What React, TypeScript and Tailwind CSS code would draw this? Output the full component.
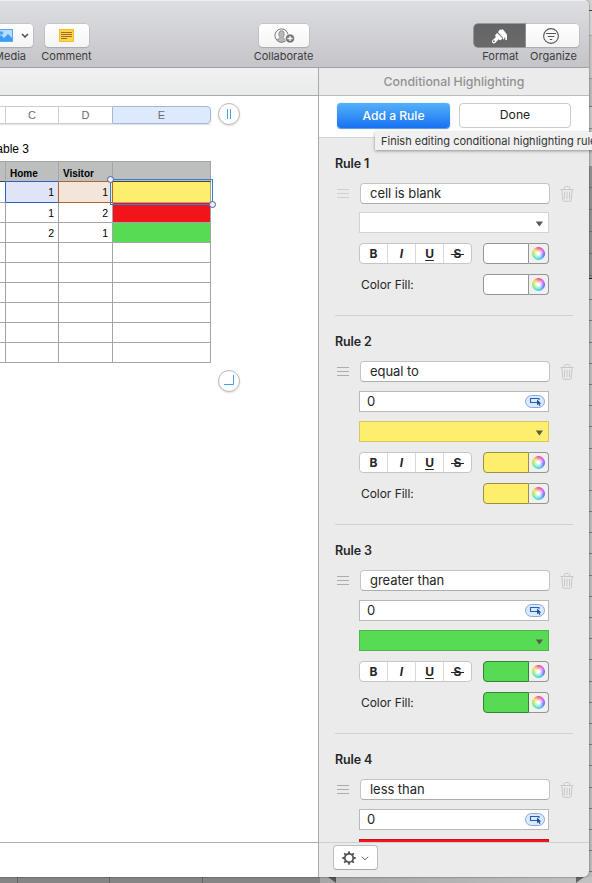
import type { ReactNode } from 'react'
import clsx from 'clsx'

interface Rule {
  title: string
  condition: string
  value?: string
  fill: string
  fillBorder: string
  wellBorder: string
  mutedGrip?: boolean
}

const RULES: Rule[] = [
  { title: 'Rule 1', condition: 'cell is blank', fill: 'bg-white', fillBorder: 'border-[#d3d3d3]', wellBorder: 'border-[#959595]', mutedGrip: true },
  { title: 'Rule 2', condition: 'equal to', value: '0', fill: 'bg-[#feee6e]', fillBorder: 'border-[#d5c85e]', wellBorder: 'border-[#989043]' },
  { title: 'Rule 3', condition: 'greater than', value: '0', fill: 'bg-[#57db54]', fillBorder: 'border-[#4ab847]', wellBorder: 'border-[#348332]' },
  { title: 'Rule 4', condition: 'less than', value: '0', fill: 'bg-[#f3131b]', fillBorder: 'border-[#cd1017]', wellBorder: 'border-[#920b10]' },
]

function PictureIcon() {
  return (
    <svg width="16" height="14" viewBox="0 0 16 14">
      <rect x="0.5" y="0.5" width="15" height="12" fill="#b8dcfb" stroke="#58a9f2" />
      <circle cx="4.5" cy="4" r="1.8" fill="#4ba4f5" />
      <path d="M1 12V9l3-3 3 3 4-4 4 4v3z" fill="#3c9cf6" />
    </svg>
  )
}

function NoteIcon() {
  return (
    <svg width="15" height="13" viewBox="0 0 15 13">
      <rect x="0.5" y="0.5" width="14" height="12" fill="#fdd545" stroke="#f6bd33" />
      <path d="M2 3.5h11M2 5.5h11M2 7.5h11M2 9.5h6" stroke="#96602b" strokeWidth="0.9" />
    </svg>
  )
}

function PersonAddIcon() {
  return (
    <svg width="22" height="16" viewBox="0 0 22 16" className="mt-px">
      <circle cx="8.5" cy="7.5" r="6.6" fill="#f7f7f7" stroke="#797979" />
      <path d="M3.7 12.2c1-1.6 3-1.4 3.4-2.6-.9-1.2-1.4-2.7-1.2-4.3.3-1.7 1.3-2.5 2.6-2.5s2.4.8 2.6 2.5c.2 1.6-.3 3.1-1.2 4.3.4 1.2 2.3 1 3.4 2.6a6.6 6.6 0 0 1-9.6 0z" fill="#b8b8b8" stroke="#7c7c7c" strokeWidth="0.8" />
      <circle cx="17" cy="10.5" r="4.6" fill="#717171" stroke="#fbfbfb" strokeWidth="0.8" />
      <path d="M14.4 10.5h5.2M17 7.9v5.2" stroke="#fff" strokeWidth="1.3" />
    </svg>
  )
}

function BrushIcon() {
  return (
    <svg width="18" height="16" viewBox="0 0 18 16">
      <path d="M6.9 4.2 9 1.2l1.1 1L11 .9l1.3.9 2.9 3.6c.5.8.8 1.3.8 2.1v4c0 1-1.7 1-1.7 0V9.3l-1 .3v1.2c0 .8-1.4.8-1.4 0v-.9z" fill="#fff" />
      <path d="m6.1 5 5.5 5.2-1.4 1.5c-.7.6-1.5.6-2.1 0l-.5-.4-3.2 3.5c-1.8 1.9-4.7-.6-2.9-2.5L5 9l-.5-.6c-.5-.6-.4-1.2 0-1.7z" fill="#fff" />
      <path d="m6.5 4.5 5.6 5.3" stroke="#666" strokeWidth="0.6" />
      <circle cx="2.9" cy="13.2" r="0.9" fill="#666" />
    </svg>
  )
}

function FilterIcon() {
  return (
    <svg width="18" height="18" viewBox="0 0 18 18">
      <circle cx="9" cy="9" r="7.4" fill="none" stroke="#585858" strokeWidth="1.1" />
      <path d="M4 6.5h10M5.7 9.5h6.6M7.8 12.5h2.4" stroke="#585858" strokeWidth="1.2" />
    </svg>
  )
}

function TrashIcon() {
  return (
    <svg width="14" height="16" viewBox="0 0 14 16" fill="none" stroke="#c8c8c8">
      <path d="M.5 3.5h13M4.3 3.2V2c0-1 .5-1.5 1.3-1.5h2.8c.8 0 1.3.5 1.3 1.5v1.2M1.8 3.8l1 10.2c.1.9.5 1.3 1.3 1.3h5.8c.8 0 1.2-.4 1.3-1.3l1-10.2" />
      <path d="M4.5 5.7v7.6M7 5.7v7.6M9.5 5.7v7.6" />
    </svg>
  )
}

function CellPickerIcon() {
  return (
    <svg width="20" height="13" viewBox="0 0 20 13">
      <rect x="0.5" y="0.5" width="19" height="12" rx="6" fill="#dce8fb" stroke="#86a9e6" />
      <path d="M12 7.5H5.5v-4h8.5V5" fill="none" stroke="#1f62b5" strokeWidth="1.1" />
      <path d="m12 4.6 4.3 3.9-1.8.1 1 1.9-1.1.5-1-2L12 10.3z" fill="#17539f" />
    </svg>
  )
}

function GearIcon() {
  const teeth = [0, 45, 90, 135, 180, 225, 270, 315]
  return (
    <svg width="14" height="14" viewBox="0 0 14 14">
      <circle cx="7" cy="7" r="4.2" fill="none" stroke="#555" strokeWidth="1.7" />
      {teeth.map((a) => (
        <path key={a} d="M5.6 3 6.3.2h1.4L8.4 3z" fill="#555" transform={`rotate(${a} 7 7)`} />
      ))}
    </svg>
  )
}

function ToolButton({ className, children }: { className?: string; children: ReactNode }) {
  return (
    <button className={clsx('flex h-[23px] items-center justify-center rounded-[4px] bg-gradient-to-b from-white to-[#f3f4f4] shadow-[0_0_0_0.5px_#b4b4b7,0_1px_1px_#a5a5a8]', className)}>
      {children}
    </button>
  )
}

function Toolbar() {
  return (
    <header className="flex h-[68px] shrink-0 rounded-tr-[5px] border-t border-b border-t-[#eeeff0] border-b-[#a2a2a4] bg-gradient-to-b from-[#dddee1] to-[#c5c5c9] pt-[23px] text-[11px] leading-[18px] text-[#3c3c3e]">
      <div className="flex w-[33px] flex-col items-end">
        <ToolButton className="w-[50px] gap-[8px] pl-[10px]">
          <PictureIcon />
          <svg width="8" height="6" viewBox="0 0 8 6" fill="none" stroke="#4a4a4a" strokeWidth="1.5">
            <path d="m1 1 3 3 3-3" />
          </svg>
        </ToolButton>
        <span className="mr-[7px]">Media</span>
      </div>
      <div className="ml-[4px] flex w-[59px] flex-col items-center">
        <ToolButton className="w-[44px]"><NoteIcon /></ToolButton>
        <span>Comment</span>
      </div>
      <div className="ml-[153px] flex w-[70px] flex-col items-center">
        <ToolButton className="w-[50px]"><PersonAddIcon /></ToolButton>
        <span className="mr-px">Collaborate</span>
      </div>
      <div className="ml-[155px] flex w-[52px] flex-col items-center">
        <button className="flex h-[23px] w-[52px] items-center justify-center rounded-l-[4px] bg-gradient-to-b from-[#636466] to-[#6a6a6b] shadow-[0_0_0_0.5px_#5c5c5e]">
          <BrushIcon />
        </button>
        <span className="ml-px">Format</span>
      </div>
      <div className="flex w-[53px] flex-col items-center">
        <ToolButton className="w-[53px] rounded-l-none pr-[4px]"><FilterIcon /></ToolButton>
        <span className="ml-[2px]">Organize</span>
      </div>
    </header>
  )
}

function Row({ cells, height = 'h-[20px]' }: { cells: ReactNode[]; height?: string }) {
  const widths = ['w-[6px]', 'w-[53px]', 'w-[54px]', 'w-[98px]']
  return (
    <div className={clsx('flex', height)}>
      {widths.map((w, i) => (
        <div key={w} className={clsx('border-r border-b border-[#a5a5a5]', w)}>{cells[i]}</div>
      ))}
    </div>
  )
}

function Value({ children }: { children: ReactNode }) {
  return <div className="flex h-full items-center justify-end pt-[2px] pr-[4px] text-[10.5px]">{children}</div>
}

function HandleCircle({ className, children }: { className?: string; children: ReactNode }) {
  return (
    <div className={clsx('flex size-[22px] items-center justify-center rounded-full border border-[#bcbcbc] bg-white shadow-[0_1px_2px_#ddd]', className)}>
      {children}
    </div>
  )
}

function Sheet() {
  return (
    <main className="flex w-[318px] flex-col bg-white">
      <div className="h-[28px] border-b border-[#a9aaaa] bg-gradient-to-b from-[#f0f1f1] to-[#e9eaea]" />
      <div className="flex h-[746px] flex-col pt-[7px]">
        <div className="flex h-[22px] items-center">
          <div className="mt-px flex h-[18px] w-[211px] text-[11px] leading-[16px] text-[#6c6c6c] shadow-[0_1px_1px_#e4e4e4]">
            <div className="w-[6px] border-y border-r border-[#cdcdcd]" />
            <div className="w-[53px] border-y border-r border-[#cdcdcd] text-center">C</div>
            <div className="w-[53px] border-y border-[#cdcdcd] text-center">D</div>
            <div className="w-[99px] rounded-r-[4px] border border-[#a2b9d4] bg-[#dceafc] text-center">E</div>
          </div>
          <HandleCircle className="ml-[7px]">
            <svg width="4" height="10" viewBox="0 0 4 10" stroke="#4ba5ea">
              <path d="M.5 0v10M3.5 0v10" />
            </svg>
          </HandleCircle>
        </div>
        <div className="mt-[16px] flex h-[16px] w-[29px] items-center justify-end overflow-hidden text-[12px] whitespace-nowrap text-black">Table 3</div>
        <div className="relative mt-[4px] w-[211px] border-t border-[#a5a5a5] text-[10px] text-black">
          <div className="flex h-[20px] bg-[#bdbfbe] font-bold">
            <div className="w-[6px] border-r border-b border-[#a5a5a5] border-b-[#444]" />
            <div className="flex w-[53px] items-center border-r border-b border-[#a5a5a5] border-b-[#2d5fcb] pt-[3px] pl-[4px]">Home</div>
            <div className="flex w-[54px] items-center border-r border-b border-[#a5a5a5] border-b-[#b5622d] pt-[3px] pl-[4px]">Visitor</div>
            <div className="w-[98px] border-r border-b border-[#a5a5a5] border-b-[#444]" />
          </div>
          <div className="flex h-[21px]">
            <div className="w-[6px] border-r border-b border-r-[#2d5fcb] border-b-[#a5a5a5]" />
            <div className="w-[53px] border-r border-b border-r-[#b5622d] border-b-[#2d5fcb] bg-[#dfe4f7]"><Value>1</Value></div>
            <div className="w-[54px] border-r border-b border-[#b5622d] bg-[#f4e5db]"><Value>1</Value></div>
            <div className="w-[98px] border-r border-b border-[#a5a5a5] bg-[#feee6e]" />
          </div>
          <Row cells={[null, <Value>1</Value>, <Value>2</Value>, <div className="h-full bg-[#f3131b]" />]} />
          <Row cells={[null, <Value>2</Value>, <Value>1</Value>, <div className="h-full bg-[#57db54]" />]} />
          {[0, 1, 2, 3, 4, 5].map((i) => <Row key={i} cells={[]} />)}

          {/* selection outline with its two drag handles */}
          <div className="absolute top-[17px] left-[110px] h-[26px] w-[103px] border border-[#357fc8]">
            <div className="absolute -top-[4px] -left-[4px] size-[7px] rounded-full border border-[#4a5f9c] bg-[#eef0fa]" />
            <div className="absolute -right-[4px] -bottom-[4px] size-[7px] rounded-full border border-[#4a5f9c] bg-[#eef0fa]" />
          </div>
        </div>
        <HandleCircle className="mt-[7px] ml-[218px]">
          <svg width="10" height="10" viewBox="0 0 10 10" fill="none" stroke="#3da0ee" className="mr-px mb-[2px]">
            <path d="M0 9.5h9.5V0" />
          </svg>
        </HandleCircle>
      </div>
      <div className="flex-1 border-t border-[#adadad]" />
    </main>
  )
}

function ColorWell({ fill, border }: { fill: string; border: string }) {
  return (
    <div className="flex h-[21px] w-[66px]">
      <div className={clsx('w-[46px] rounded-l-[4px] border', fill, border)} />
      <div className="flex flex-1 items-center justify-center rounded-r-[4px] border border-l-0 border-[#959595] bg-[#f0f0f0]">
        <div className="flex size-[13px] rounded-full bg-[conic-gradient(#ee4a62,#df50ee,#5f62f0,#46b9f5,#43e5bd,#85ec5d,#f3dc4b,#ee4a62)]">
          <div className="size-full rounded-full bg-[radial-gradient(circle,#fff_12%,#ffffff00_66%)]" />
        </div>
      </div>
    </div>
  )
}

function StyleButtons() {
  return (
    <div className="flex h-[21px] w-[113px] divide-x divide-[#d9d9d9] rounded-[4px] border border-[#c6c6c6] bg-white text-[12px] font-bold text-[#262626] [&>button]:flex-1">
      <button>B</button>
      <button className="italic">I</button>
      <button className="underline underline-offset-2">U</button>
      <button className="flex items-center justify-center">
        <span className="relative">
          S
          <span className="absolute top-1/2 -right-[3px] -left-[3px] h-px bg-[#262626]" />
        </span>
      </button>
    </div>
  )
}

function RuleSection({ rule }: { rule: Rule }) {
  return (
    <section className="ml-[16px] w-[239px] shrink-0 pt-[16px] text-[13px] tracking-[-0.05px] text-[#262626]">
      <h3 className="h-[20px] text-[12.5px] leading-[20px] font-semibold tracking-[-0.1px]">{rule.title}</h3>
      <div className="mt-[9px] flex items-center">
        <div className="mx-[2px] flex w-[12px] flex-col gap-[3px]">
          {[0, 1, 2].map((i) => (
            <div key={i} className={clsx('h-px', rule.mutedGrip ? 'bg-[#cfcfcf]' : 'bg-[#adadad]')} />
          ))}
        </div>
        <div className="ml-[9px] flex h-[21px] w-[190px] items-center rounded-[4px] border border-[#c4c4c4] border-b-[#adadad] bg-white pl-[9px]">
          {rule.condition}
        </div>
        <div className="ml-[10px]"><TrashIcon /></div>
      </div>
      <div className="ml-[24px] w-[190px]">
        {rule.value && (
          <div className="mt-[9px] flex h-[21px] items-center justify-between border border-[#b9b9b9] bg-white pr-[3px] pl-[7px]">
            {rule.value}
            <CellPickerIcon />
          </div>
        )}
        <div className={clsx('flex h-[21px] items-center justify-end border pr-[5px]', rule.value ? 'mt-[9px]' : 'mt-[8px]', rule.fill, rule.fillBorder)}>
          <svg width="8" height="6" viewBox="0 0 8 6" className="mt-[2px]">
            <path d="M.8.5H8L4.4 5.5z" fill="#5a5a4e" />
          </svg>
        </div>
        <div className="mt-[10px] flex justify-between">
          <StyleButtons />
          <ColorWell fill={rule.fill} border={rule.wellBorder} />
        </div>
        <div className="mt-[10px] flex items-center justify-between pl-[2px]">
          <span className="text-[12px]">Color Fill:</span>
          <ColorWell fill={rule.fill} border={rule.wellBorder} />
        </div>
      </div>
      <div className="mt-[20px] h-px w-[238px] bg-[#d2d2d2]" />
    </section>
  )
}

function Inspector() {
  return (
    <aside className="flex w-[271px] flex-col rounded-br-[6px] border-l border-[#a9a9a9] bg-[#ebebeb]">
      <h2 className="flex h-[28px] items-center justify-center border-b border-[#bcbcbc] pt-px text-[12.3px] font-medium text-[#929292]">Conditional Highlighting</h2>
      <div className="relative flex h-[42px] gap-[9px] border-b border-[#d5d5d5] bg-white pt-[7px] pl-[18px]">
        <button className="h-[25px] w-[113px] rounded-[4px] bg-gradient-to-b from-[#55b0f9] to-[#1671f3] pt-px text-[12.1px] font-medium text-white shadow-[0_0.5px_1px_#5b91d8]">Add a Rule</button>
        <button className="h-[25px] w-[112px] rounded-[4px] border border-[#cbcbcb] bg-white text-[12.2px] text-[#222]">Done</button>
        {/* runs past the window's right edge, over the windows behind */}
        <div className="absolute top-[36px] left-[56px] z-10 h-[18px] w-[260px] bg-[#f0f0f0] pl-[6px] text-[11px] leading-[18px] whitespace-nowrap text-[#333] shadow-[0_1px_3px_#00000066]">
          Finish editing conditional highlighting rules
        </div>
      </div>
      <div className="flex h-[704px] flex-col overflow-hidden">
        {RULES.map((rule) => <RuleSection key={rule.title} rule={rule} />)}
      </div>
      <footer className="flex-1 border-t border-[#cfcfcf] pt-[2px] pl-[14px]">
        <button className="flex h-[25px] w-[45px] items-center justify-center gap-[5px] rounded-[4px] border border-[#bdbdbd] border-b-[#a8a8a8] bg-white">
          <GearIcon />
          <svg width="8" height="5" viewBox="0 0 8 5" fill="none" stroke="#666" className="mt-[2px]">
            <path d="m.8.8 3.2 3 3.2-3" />
          </svg>
        </button>
      </footer>
    </aside>
  )
}

// Whatever shows of the windows stacked behind, at the right and bottom edges
function Backdrop() {
  return (
    <div className="absolute inset-0 flex flex-col bg-[#bcbcbc]">
      <div className="flex h-[877px] flex-col items-end overflow-hidden [&>div]:w-[12px] [&>div]:shrink-0">
        <div className="h-[11px] border-b border-[#444] bg-[#d0d0d0]" />
        <div className="h-[25px] border-b border-[#aaa] bg-[#d3d3d3]" />
        <div className="h-[43px] border-b border-[#999] bg-[#c4c4c4]" />
        <div className="h-[28px] border-b border-[#777] bg-[#b8b8b8]" />
        <div className="h-[22px] border-b border-[#888] bg-[#c4c4c4]" />
        <div className="h-[37px] bg-[#bfbfbf]" />
        {[0, 1, 2, 3, 4].map((i) => <div key={i} className="h-[22px] border-b border-[#707070] bg-[#8e8e8e]" />)}
        <div className="h-[3px] border-b border-[#222] bg-[#8e8e8e]" />
        {Array.from({ length: 29 }, (_, i) => <div key={i} className="h-[21.2px] border-b border-[#777] bg-[#b9b9b9]" />)}
      </div>
      <div className="flex h-[6px] bg-[#858585]">
        <div className="w-[18px] border-r border-[#666]" />
        <div className="w-[92px] border-r border-[#666]" />
        <div className="w-[93px] border-r border-[#666]" />
        <div className="w-[117px]" />
        <div className="flex flex-1 justify-between bg-gradient-to-r from-[#a6a6a6] to-[#c2c2c2] pr-[8px] pl-[8px]">
          <svg width="8" height="6" viewBox="0 0 8 6"><path d="M0 0h8v6z" fill="#555" /></svg>
          <svg width="8" height="6" viewBox="0 0 8 6"><path d="M8 0H0v6z" fill="#666" /></svg>
        </div>
      </div>
    </div>
  )
}

export default function App() {
  return (
    <div className="relative h-[883px] w-[592px] overflow-hidden font-['Inter','Liberation_Sans',sans-serif]">
      <Backdrop />
      <div className="relative flex h-[877px] w-[589px] flex-col rounded-tr-[5px] rounded-br-[6px] shadow-[0_0_2px_#00000099]">
        <Toolbar />
        <div className="flex min-h-0 flex-1">
          <div className="flex font-['Liberation_Sans',Arial,sans-serif]"><Sheet /></div>
          <Inspector />
        </div>
      </div>
    </div>
  )
}
